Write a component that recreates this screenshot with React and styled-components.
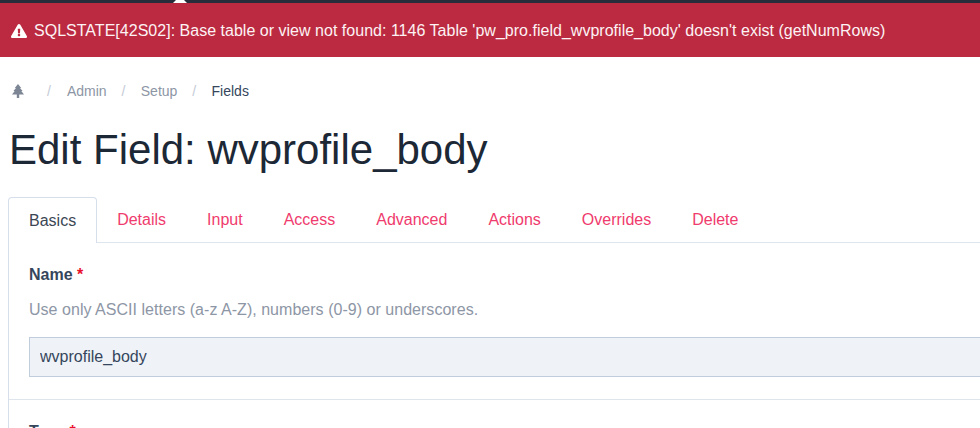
import React from 'react'
import styled, {createGlobalStyle} from 'styled-components';
import {FaExclamationTriangle} from 'react-icons/fa';

const tabs=['Details','Input','Access','Advanced','Actions','Overrides','Delete'];

function App() {
  return (
    <Page>
      <GlobalStyle/>
      <TopBar><Notch/></TopBar>
      <Alert>
        <AlertIcon/>
        SQLSTATE[42S02]: Base table or view not found: 1146 Table 'pw_pro.field_wvprofile_body' doesn't exist (getNumRows)
      </Alert>
      <Content>
        <Breadcrumbs>
          <TreeIcon viewBox="0 0 12 14">
            <path fill="currentColor" d="M6 0L9.200 3.900H8L10.600 7H9.300L12 10.600H7.200V14H4.800V10.600H0L2.700 7H1.400L4 3.900H2.800z"/>
          </TreeIcon>
          <Sep $first>/</Sep>
          <Crumb>Admin</Crumb>
          <Sep>/</Sep>
          <Crumb>Setup</Crumb>
          <Sep>/</Sep>
          <Crumb $current>Fields</Crumb>
        </Breadcrumbs>
        <Title>Edit Field: wvprofile_body</Title>
        <TabBar>
          <Tab $active>Basics</Tab>
          {tabs.map((tab)=>
            <Tab key={tab}>{tab}</Tab>
          )}
        </TabBar>
        <Panel>
          <FieldSection>
            <Label>Name <Required>*</Required></Label>
            <Hint>Use only ASCII letters (a-z A-Z), numbers (0-9) or underscores.</Hint>
            <Input value="wvprofile_body" readOnly/>
          </FieldSection>
          <FieldSection $next>
            <Label>Type <Required>*</Required></Label>
          </FieldSection>
        </Panel>
      </Content>
    </Page>
  )
}

export default App

const GlobalStyle=createGlobalStyle`
html,body{
  margin:0;
  padding:0;
  height:428px;
  overflow:hidden;
  background:#fff;
}
`
const Page=styled.div`
width:1400px;
height:428px;
overflow:hidden;
font-family:"Liberation Sans",Arial,sans-serif;
color:#1c2836;
`
const TopBar=styled.div`
position:relative;
height:3px;
background:#272d3b;
`
const Notch=styled.div`
position:absolute;
left:172.500px;
top:-4px;
width:0;
height:0;
border-left:7px solid transparent;
border-right:7px solid transparent;
border-bottom:7px solid #fff;
`
const Alert=styled.div`
display:flex;
align-items:center;
box-sizing:border-box;
height:54px;
padding:1px 0 0 11px;
background:#bb2a40;
color:#fdf2f4;
font-size:16px;
letter-spacing:.018px;
`
const AlertIcon=styled(FaExclamationTriangle)`
width:16px;
height:16px;
margin-right:7px;
color:#fff;
`
const Content=styled.div`
padding:0 0 0 8px;
`
const Breadcrumbs=styled.div`
display:flex;
align-items:center;
height:20px;
margin-top:24px;
padding-left:4px;
font-size:14px;
color:#8d96a5;
`
const TreeIcon=styled.svg`
width:12px;
height:14px;
color:#7d8694;
`
const Sep=styled.span`
margin:0 15.300px 0 ${props => props.$first ? '23px' : '15px'};
color:#c4cbd6;
&:first-of-type{
  margin-right:16px;
}
`
const Crumb=styled.span`
color:${props => props.$current ? '#35465c' : '#8d96a5'};
`
const Title=styled.h1`
margin:23px 0 0 1px;
font-size:42px;
line-height:52px;
font-weight:400;
color:#1c2836;
`
const TabBar=styled.div`
display:flex;
margin-top:21px;
height:45px;
border-bottom:1px solid #dfe5ec;
`
const Tab=styled.div`
display:flex;
align-items:center;
height:45px;
padding:0 20.500px;
box-sizing:border-box;
font-size:16px;
color:${props => props.$active ? '#3b4654' : '#ef3b6d'};
${props => props.$active && `
  border:1px solid #d5deea;
  border-bottom:0;
  border-radius:4px 4px 0 0;
  height:46px;
  padding:0 20px;
  margin-right:-.5px;
  background:#fff;
`}
`
const Panel=styled.div`
border-left:1px solid #d5deea;
`
const FieldSection=styled.div`
padding:22px 0 ${props => props.$next ? '0' : '22px'} 20px;
border-top:${props => props.$next ? '1px solid #dfe5ec' : '0'};
`
const Label=styled.div`
font-size:16px;
font-weight:700;
line-height:20px;
color:#35465c;
`
const Required=styled.span`
color:#e8112d;
`
const Hint=styled.div`
margin-top:15px;
font-size:16px;
line-height:20px;
letter-spacing:.03px;
color:#8d96a5;
`
const Input=styled.input`
display:block;
box-sizing:border-box;
width:1300px;
height:40px;
margin-top:17px;
padding:0 10px;
border:1px solid #bfcddd;
background:#eff2f7;
font:16px "Liberation Sans",Arial,sans-serif;
color:#35465c;
border-radius:0;
outline:none;
`
